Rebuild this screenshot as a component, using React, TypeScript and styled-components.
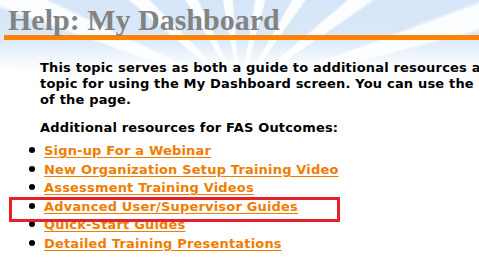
import styled, { createGlobalStyle } from 'styled-components';

const GlobalStyle = createGlobalStyle`
  html, body {
    margin: 0;
    padding: 0;
    background: #fff;
    overflow: hidden;
  }
  body {
    width: 479px;
    height: 258px;
  }
`;

const Page = styled.div`
  position: relative;
  width: 479px;
  height: 258px;
  overflow: hidden;
  background:
    linear-gradient(to bottom, rgba(255, 255, 255, 0) 0px, rgba(255, 255, 255, 0.1) 38px, rgba(255, 255, 255, 0.85) 64px, #fff 80px),
    repeating-conic-gradient(from -4deg at 240px 92px, #d6e6f8 0deg 13deg, #fbfdff 14deg 19deg, #d6e6f8 20deg);
`;

const Header = styled.div`
  padding: 4px 0 0 4px;
`;

const Title = styled.h1`
  margin: 0;
  padding-left: 4px;
  font-family: 'Liberation Serif', 'Times New Roman', serif;
  font-weight: bold;
  font-size: 30px;
  line-height: 31px;
  color: #838383;
  white-space: nowrap;
`;

const Rule = styled.div`
  height: 5px;
  background: #ff8200;
`;

const Content = styled.div`
  padding: 20px 0 0 40px;
  font-family: 'DejaVu Sans', Verdana, sans-serif;
  font-weight: bold;
  font-size: 13px;
  letter-spacing: 0.18px;
  color: #000;
  white-space: nowrap;
`;

const Intro = styled.p`
  margin: 0;
  line-height: 16px;
`;

const Lead = styled.p`
  margin: 12px 0 0;
  line-height: 16px;
`;

const Resources = styled.ul`
  list-style: none;
  margin: 6px 0 0 -11px;
  padding: 0;
`;

const Item = styled.li`
  display: flex;
  align-items: center;
  gap: 9px;
  line-height: 18.5px;

  &::before {
    content: '';
    flex: none;
    width: 6px;
    height: 6px;
    border-radius: 50%;
    background: #000;
    margin-top: -2px;
  }
`;

const Link = styled.a`
  color: #f07d00;
  text-decoration: underline;
  text-underline-offset: 2px;
`;

const Highlight = styled.div`
  position: absolute;
  left: 9px;
  top: 197px;
  width: 331px;
  height: 25px;
  box-sizing: border-box;
  border: 3px solid #e61e2a;
  pointer-events: none;
`;

const links = [
  'Sign-up For a Webinar',
  'New Organization Setup Training Video',
  'Assessment Training Videos',
  'Advanced User/Supervisor Guides',
  'Quick-Start Guides',
  'Detailed Training Presentations',
];

export default function App() {
  return (
    <Page>
      <GlobalStyle />
      <Header>
        <Title>Help: My Dashboard</Title>
        <Rule />
      </Header>
      <Content>
        <Intro>
          This topic serves as both a guide to additional resources and a help
          <br />
          topic for using the My Dashboard screen. You can use the links at the top
          <br />
          of the page.
        </Intro>
        <Lead>Additional resources for FAS Outcomes:</Lead>
        <Resources>
          {links.map((label) => (
            <Item key={label}>
              <Link href="#">{label}</Link>
            </Item>
          ))}
        </Resources>
      </Content>
      <Highlight />
    </Page>
  );
}
